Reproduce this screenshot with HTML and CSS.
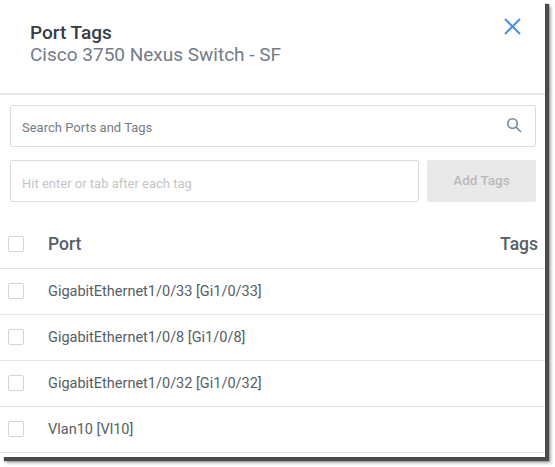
FILE: index.html
```html
<!DOCTYPE html>
<html lang="en">
<head>
    <meta charset="UTF-8">
    <title>Port Tags</title>
    <link rel="stylesheet" href="styles.css">
</head>
<body>
<div class="panel">
    <div class="header">
        <div>
            <h1>Port Tags</h1>
            <div class="subtitle">Cisco 3750 Nexus Switch - SF</div>
        </div>
        <svg class="close" width="18" height="18" viewBox="0 0 18 18"><path d="M2 2L17 17M17 2L2 17" /></svg>
    </div>

    <div class="controls">
        <div class="field search">
            <span>Search Ports and Tags</span>
            <svg class="search-icon" width="16" height="16" viewBox="0 0 16 16"><circle cx="6.5" cy="6.5" r="4.7" /><path d="M10 10L15 15" /></svg>
        </div>
        <div class="tag-row">
            <div class="field tag-input"><span>Hit enter or tab after each tag</span></div>
            <button class="add-btn" disabled>Add Tags</button>
        </div>
    </div>

    <div class="table-head">
        <span class="check"></span>
        <span class="col-port">Port</span>
        <span class="col-tags">Tags</span>
    </div>
    <div class="row"><span class="check"></span><span class="row-label">GigabitEthernet1/0/33 [Gi1/0/33]</span></div>
    <div class="row"><span class="check"></span><span class="row-label">GigabitEthernet1/0/8 [Gi1/0/8]</span></div>
    <div class="row"><span class="check"></span><span class="row-label">GigabitEthernet1/0/32 [Gi1/0/32]</span></div>
    <div class="row"><span class="check"></span><span class="row-label">Vlan10 [Vl10]</span></div>
</div>
</body>
</html>
```

FILE: styles.css
```css
html, body { height: 467px; }
body { margin: 0; background: #fff; font-family: Roboto, "Liberation Sans", sans-serif; overflow: hidden; }
.panel { width: 545px; height: 457px; background: #fff; box-shadow: 4px 4px 1px #4a4a4a, 6px 6px 3px #0005; overflow: hidden; }

.header { height: 93px; padding: 0 24px 0 30px; display: flex; justify-content: space-between; border-bottom: 2px solid #e8e8e8; }
h1 { margin: 21px 0 0; font-size: 19px; line-height: 23px; font-weight: 500; color: #353c42; }
.subtitle { font-size: 19px; line-height: 22px; color: #737c87; }
.close { margin-top: 17px; fill: none; stroke: #4a90e2; stroke-width: 2; }

.controls { padding: 10px 9px 0 10px; }
.field { height: 42px; box-sizing: border-box; border: 1px solid #dcdcdc; border-radius: 2px; display: flex; align-items: center; justify-content: space-between; padding: 0 12px 0 11px; font-size: 13px; }
.search { color: #747c85; }
.search span { padding-top: 3px; }
.search-icon { fill: none; stroke: #6f8a9c; stroke-width: 1.6; margin: -3px 1px 0 0; }
.tag-row { display: flex; gap: 8px; margin-top: 13px; }
.tag-input { flex: 1; color: #c4c4c4; }
.tag-input span { padding-top: 5px; }
.add-btn { width: 109px; height: 42px; border: none; border-radius: 2px; background: #e9e9e9; color: #b9b9b9; font: 500 13.5px Roboto, sans-serif; padding: 0 0 2px; }

.table-head, .row { display: flex; align-items: center; box-sizing: border-box; border-bottom: 1px solid #e4e4e4; padding-left: 8px; color: #565e65; }
.table-head { height: 67px; padding-top: 18px; font-size: 17.5px; font-weight: 500; }
.row { height: 46px; padding-bottom: 2px; font-size: 14.5px; }
.row-label { padding-top: 2px; }
.check { width: 14px; height: 14px; border: 1px solid #d4d4d4; border-radius: 2px; margin-right: 24px; flex: none; }
.col-port { flex: 1; }
.col-tags { padding-right: 7px; }
```
